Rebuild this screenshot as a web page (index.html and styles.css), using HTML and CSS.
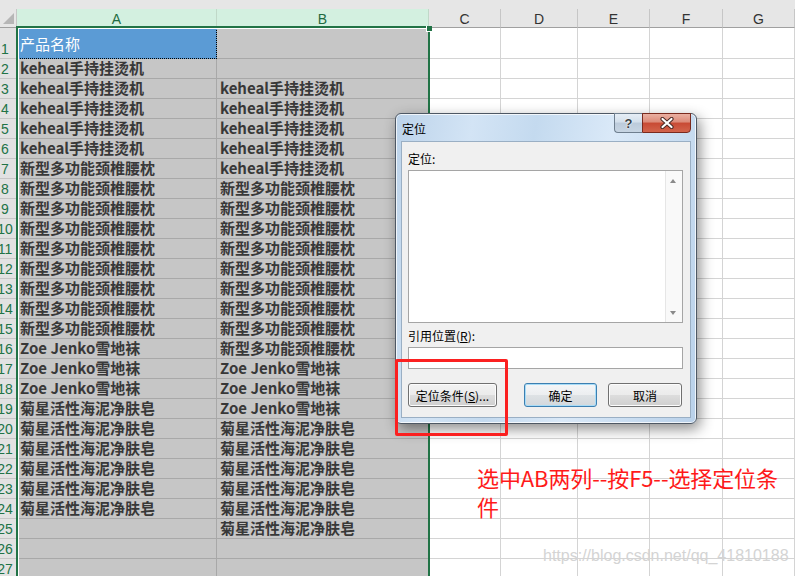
FILE: index.html
```html
<!DOCTYPE html>
<html lang="zh-CN">
<head>
<meta charset="utf-8">
<title>定位</title>
<link rel="stylesheet" href="styles.css">
</head>
<body>
<div class="sheet">
  <div class="topband"></div>
  <div class="row hdr"><div class="corner"><span class="tri"></span></div><div class="ch on">A</div><div class="ch on">B</div><div class="ch">C</div><div class="ch">D</div><div class="ch">E</div><div class="ch">F</div><div class="ch">G</div></div>
  <div class="row r1"><div class="rh"><span>1</span></div><div class="c s a1">产品名称</div><div class="c s"></div><div class="c"></div><div class="c"></div><div class="c"></div><div class="c"></div><div class="c"></div></div>
  <div class="row"><div class="rh"><span>2</span></div><div class="c s">keheal手持挂烫机</div><div class="c s"></div><div class="c"></div><div class="c"></div><div class="c"></div><div class="c"></div><div class="c"></div></div>
  <div class="row"><div class="rh"><span>3</span></div><div class="c s">keheal手持挂烫机</div><div class="c s">keheal手持挂烫机</div><div class="c"></div><div class="c"></div><div class="c"></div><div class="c"></div><div class="c"></div></div>
  <div class="row"><div class="rh"><span>4</span></div><div class="c s">keheal手持挂烫机</div><div class="c s">keheal手持挂烫机</div><div class="c"></div><div class="c"></div><div class="c"></div><div class="c"></div><div class="c"></div></div>
  <div class="row"><div class="rh"><span>5</span></div><div class="c s">keheal手持挂烫机</div><div class="c s">keheal手持挂烫机</div><div class="c"></div><div class="c"></div><div class="c"></div><div class="c"></div><div class="c"></div></div>
  <div class="row"><div class="rh"><span>6</span></div><div class="c s">keheal手持挂烫机</div><div class="c s">keheal手持挂烫机</div><div class="c"></div><div class="c"></div><div class="c"></div><div class="c"></div><div class="c"></div></div>
  <div class="row"><div class="rh"><span>7</span></div><div class="c s">新型多功能颈椎腰枕</div><div class="c s">keheal手持挂烫机</div><div class="c"></div><div class="c"></div><div class="c"></div><div class="c"></div><div class="c"></div></div>
  <div class="row"><div class="rh"><span>8</span></div><div class="c s">新型多功能颈椎腰枕</div><div class="c s">新型多功能颈椎腰枕</div><div class="c"></div><div class="c"></div><div class="c"></div><div class="c"></div><div class="c"></div></div>
  <div class="row"><div class="rh"><span>9</span></div><div class="c s">新型多功能颈椎腰枕</div><div class="c s">新型多功能颈椎腰枕</div><div class="c"></div><div class="c"></div><div class="c"></div><div class="c"></div><div class="c"></div></div>
  <div class="row"><div class="rh"><span>10</span></div><div class="c s">新型多功能颈椎腰枕</div><div class="c s">新型多功能颈椎腰枕</div><div class="c"></div><div class="c"></div><div class="c"></div><div class="c"></div><div class="c"></div></div>
  <div class="row"><div class="rh"><span>11</span></div><div class="c s">新型多功能颈椎腰枕</div><div class="c s">新型多功能颈椎腰枕</div><div class="c"></div><div class="c"></div><div class="c"></div><div class="c"></div><div class="c"></div></div>
  <div class="row"><div class="rh"><span>12</span></div><div class="c s">新型多功能颈椎腰枕</div><div class="c s">新型多功能颈椎腰枕</div><div class="c"></div><div class="c"></div><div class="c"></div><div class="c"></div><div class="c"></div></div>
  <div class="row"><div class="rh"><span>13</span></div><div class="c s">新型多功能颈椎腰枕</div><div class="c s">新型多功能颈椎腰枕</div><div class="c"></div><div class="c"></div><div class="c"></div><div class="c"></div><div class="c"></div></div>
  <div class="row"><div class="rh"><span>14</span></div><div class="c s">新型多功能颈椎腰枕</div><div class="c s">新型多功能颈椎腰枕</div><div class="c"></div><div class="c"></div><div class="c"></div><div class="c"></div><div class="c"></div></div>
  <div class="row"><div class="rh"><span>15</span></div><div class="c s">新型多功能颈椎腰枕</div><div class="c s">新型多功能颈椎腰枕</div><div class="c"></div><div class="c"></div><div class="c"></div><div class="c"></div><div class="c"></div></div>
  <div class="row"><div class="rh"><span>16</span></div><div class="c s">Zoe Jenko雪地袜</div><div class="c s">新型多功能颈椎腰枕</div><div class="c"></div><div class="c"></div><div class="c"></div><div class="c"></div><div class="c"></div></div>
  <div class="row"><div class="rh"><span>17</span></div><div class="c s">Zoe Jenko雪地袜</div><div class="c s">Zoe Jenko雪地袜</div><div class="c"></div><div class="c"></div><div class="c"></div><div class="c"></div><div class="c"></div></div>
  <div class="row"><div class="rh"><span>18</span></div><div class="c s">Zoe Jenko雪地袜</div><div class="c s">Zoe Jenko雪地袜</div><div class="c"></div><div class="c"></div><div class="c"></div><div class="c"></div><div class="c"></div></div>
  <div class="row"><div class="rh"><span>19</span></div><div class="c s">菊星活性海泥净肤皂</div><div class="c s">Zoe Jenko雪地袜</div><div class="c"></div><div class="c"></div><div class="c"></div><div class="c"></div><div class="c"></div></div>
  <div class="row"><div class="rh"><span>20</span></div><div class="c s">菊星活性海泥净肤皂</div><div class="c s">菊星活性海泥净肤皂</div><div class="c"></div><div class="c"></div><div class="c"></div><div class="c"></div><div class="c"></div></div>
  <div class="row"><div class="rh"><span>21</span></div><div class="c s">菊星活性海泥净肤皂</div><div class="c s">菊星活性海泥净肤皂</div><div class="c"></div><div class="c"></div><div class="c"></div><div class="c"></div><div class="c"></div></div>
  <div class="row"><div class="rh"><span>22</span></div><div class="c s">菊星活性海泥净肤皂</div><div class="c s">菊星活性海泥净肤皂</div><div class="c"></div><div class="c"></div><div class="c"></div><div class="c"></div><div class="c"></div></div>
  <div class="row"><div class="rh"><span>23</span></div><div class="c s">菊星活性海泥净肤皂</div><div class="c s">菊星活性海泥净肤皂</div><div class="c"></div><div class="c"></div><div class="c"></div><div class="c"></div><div class="c"></div></div>
  <div class="row"><div class="rh"><span>24</span></div><div class="c s">菊星活性海泥净肤皂</div><div class="c s">菊星活性海泥净肤皂</div><div class="c"></div><div class="c"></div><div class="c"></div><div class="c"></div><div class="c"></div></div>
  <div class="row"><div class="rh"><span>25</span></div><div class="c s"></div><div class="c s">菊星活性海泥净肤皂</div><div class="c"></div><div class="c"></div><div class="c"></div><div class="c"></div><div class="c"></div></div>
  <div class="row"><div class="rh"><span>26</span></div><div class="c s"></div><div class="c s"></div><div class="c"></div><div class="c"></div><div class="c"></div><div class="c"></div><div class="c"></div></div>
  <div class="row"><div class="rh"><span>27</span></div><div class="c s"></div><div class="c s"></div><div class="c"></div><div class="c"></div><div class="c"></div><div class="c"></div><div class="c"></div></div>
</div>

<div class="selection"><div class="fill-handle"></div></div>

<div class="dialog">
  <div class="titlebar">
    <span class="title">定位</span>
    <div class="caption-btns">
      <div class="cbtn help">?</div>
      <div class="cbtn close">
        <svg width="14" height="12" viewBox="0 0 14 12"><path d="M2.5 2 L11.5 10 M11.5 2 L2.5 10" stroke="#4a2a25" stroke-width="4.2" stroke-linecap="round"/><path d="M2.5 2 L11.5 10 M11.5 2 L2.5 10" stroke="#fff" stroke-width="2.2" stroke-linecap="round"/></svg>
      </div>
    </div>
  </div>
  <div class="panel">
    <div class="label">定位:</div>
    <div class="listbox">
      <div class="lb-body"></div>
      <div class="vscroll"><span class="arr up"></span><span class="arr down"></span></div>
    </div>
    <div class="label ref">引用位置(<u>R</u>):</div>
    <div class="input"></div>
    <div class="btnrow">
      <div class="btn special">定位条件(<u>S</u>)...</div>
      <div class="btn-group">
        <div class="btn ok">确定</div>
        <div class="btn">取消</div>
      </div>
    </div>
  </div>
</div>

<div class="redbox"></div>
<div class="note">选中AB两列--按F5--选择定位条件</div>
<div class="watermark">https://blog.csdn.net/qq_41810188</div>
</body>
</html>
```

FILE: styles.css
```css
* { box-sizing: border-box; margin: 0; padding: 0; }
html, body { width: 795px; height: 576px; overflow: hidden; background: #fff; }
body { position: relative; font-family: "Noto Sans CJK SC", "Liberation Sans", sans-serif; }

.sheet { width: 795px; }
.topband { height: 9px; background: #e6e6e6; }

.row {
  display: grid;
  grid-template-columns: 17px 200px 212px 72px 77px 72px 73px 72px;
  grid-template-rows: 100%;
  height: 20px;
}
.row.hdr { height: 19px; }
.row.r1 { height: 31px; }

.corner {
  background: #e6e6e6;
  border-right: 1px solid #c6c6c6;
  border-bottom: 1px solid #a0a0a0;
  position: relative;
}
.tri {
  position: absolute;
  right: 2px;
  bottom: 3px;
  width: 0; height: 0;
  border-left: 11px solid transparent;
  border-bottom: 11px solid #b6b6b6;
}
.ch {
  background: #e6e6e6;
  border-right: 1px solid #c6c6c6;
  border-bottom: 1px solid #a0a0a0;
  font: 14px "Liberation Sans", sans-serif;
  color: #333;
  display: flex;
  align-items: center;
  justify-content: center;
  padding-top: 1px;
}
.ch.on { background: #d3f0e0; color: #1e6b41; border-right-color: #c0d8c8; }

.rh {
  background: #e2e2e2;
  border-right: 1px solid #c0c0c0;
  border-bottom: 1px solid #c6c6c6;
  color: #217346;
  font: 14px "Liberation Sans", sans-serif;
  overflow: hidden;
  display: flex;
  align-items: flex-end;
  padding-bottom: 1px;
}
.rh span { display: flex; justify-content: center; width: 10px; line-height: 16px; }

.c {
  border-right: 1px solid #d4d4d4;
  border-bottom: 1px solid #d4d4d4;
  min-height: 0;
}
.c.s {
  background: #c6c6c6;
  border-color: #a8a8a8;
  font-weight: bold;
  font-size: 15px;
  line-height: 16px;
  color: #383838;
  padding-left: 3px;
  padding-bottom: 2px;
  white-space: nowrap;
  display: flex;
  align-items: center;
}
.c.a1 {
  background: #5b9bd5;
  color: #fff;
  font-weight: normal;
  line-height: 19px;
  align-items: flex-end;
  padding-bottom: 5px;
  border-right: 1px dotted #000;
  border-bottom: 1px dotted #000;
}

.selection {
  position: absolute;
  left: 16px;
  top: 26px;
  width: 414px;
  height: 560px;
  border: 2px solid #217346;
  box-shadow: inset 1px 1px 0 #fff;
}
.fill-handle {
  position: absolute;
  right: -4px;
  top: -2px;
  width: 6px;
  height: 6px;
  background: #217346;
  border-left: 1px solid #fff;
  border-bottom: 1px solid #fff;
}

/* Dialog */
.dialog {
  position: absolute;
  left: 395px;
  top: 113px;
  width: 302px;
  height: 311px;
  border: 1px solid #4e5864;
  border-radius: 6px;
  background: linear-gradient(100deg, #bcd3ea 0%, #d3e4f5 22%, #c4daef 40%, #dae9f8 62%, #c9ddf1 82%, #b9d1ea 100%);
  box-shadow: inset 0 0 0 1px rgba(255,255,255,0.75), 3px 5px 14px rgba(0,0,0,0.45);
  display: flex;
  flex-direction: column;
  padding: 0 5px 5px 5px;
}
.titlebar {
  height: 27px;
  display: flex;
  align-items: center;
  padding-left: 1px;
}
.title { font-size: 12px; color: #000; line-height: 14px; padding-top: 2px; }
.caption-btns {
  margin-left: auto;
  align-self: flex-start;
  margin-top: -1px;
  display: flex;
}
.cbtn {
  height: 20px;
  display: flex;
  align-items: center;
  justify-content: center;
}
.help {
  width: 28px;
  border: 1px solid #6f7f8f;
  border-right: none;
  border-radius: 0 0 0 4px;
  background: linear-gradient(#e6eef6 0%, #d3dfeb 45%, #bccbdb 50%, #c7d5e3 100%);
  font: bold 13px "Liberation Sans", sans-serif;
  color: #3a3f46;
  text-shadow: 0 0 1px #fff, 0 0 2px #fff;
}
.close {
  width: 49px;
  border: 1px solid #7a2a1e;
  border-radius: 0 0 4px 0;
  background: linear-gradient(#eab0a2 0%, #dc8a78 45%, #c84a34 50%, #d2644c 100%);
}

.panel {
  flex: 1;
  background: #f0f0f0;
  border: 1px solid #9aafc4;
  padding: 10px 7px 0 6px;
  display: flex;
  flex-direction: column;
}
.label { font-size: 12px; line-height: 14px; color: #000; }
.label.ref { margin-top: 6px; }
.label u { text-underline-offset: 1px; }

.listbox {
  margin-top: 4px;
  height: 153px;
  border: 1px solid #a5a5a5;
  background: #fff;
  display: flex;
}
.lb-body { flex: 1; }
.vscroll {
  width: 17px;
  border-left: 1px solid #e6e6e6;
  background: #f9f9f9;
  position: relative;
}
.arr { position: absolute; left: 4px; width: 0; height: 0; border-left: 3.5px solid transparent; border-right: 3.5px solid transparent; }
.arr.up { top: 8px; border-bottom: 4px solid #8a8a8a; }
.arr.down { bottom: 7px; border-top: 4px solid #8a8a8a; }

.input {
  margin-top: 4px;
  height: 22px;
  border: 1px solid #a5a5a5;
  background: #fff;
}

.btnrow {
  margin-top: 14px;
  display: flex;
}
.btn-group { margin-left: auto; display: flex; gap: 11px; margin-right: 1px; }
.btn {
  height: 24px;
  width: 74px;
  border: 1px solid #707070;
  border-radius: 3px;
  background: linear-gradient(#f2f2f2 0%, #ebebeb 50%, #dddddd 50%, #cfcfcf 100%);
  box-shadow: inset 0 0 0 1px #fcfcfc;
  font-size: 12px;
  color: #000;
  display: flex;
  align-items: center;
  justify-content: center;
}
.btn.special { width: 89px; }
.btn.ok {
  width: 73px;
  border-color: #3c7fb1;
  background: linear-gradient(#f4f6f8 0%, #eceef0 50%, #dee2e5 50%, #d3d8dc 100%);
  box-shadow: inset 0 0 0 1px #a8dcf7;
}

.redbox {
  position: absolute;
  left: 395px;
  top: 359px;
  width: 113px;
  height: 77px;
  border: 3px solid #fb2020;
  border-radius: 2px;
}

.note {
  position: absolute;
  left: 477px;
  top: 463px;
  width: 316px;
  font-size: 22px;
  letter-spacing: -0.1px;
  line-height: 29px;
  color: #ff1a1a;
}

.watermark {
  position: absolute;
  left: 543px;
  top: 547px;
  font: 16px "Liberation Sans", sans-serif;
  color: #d4d4d4;
  white-space: nowrap;
}
```
